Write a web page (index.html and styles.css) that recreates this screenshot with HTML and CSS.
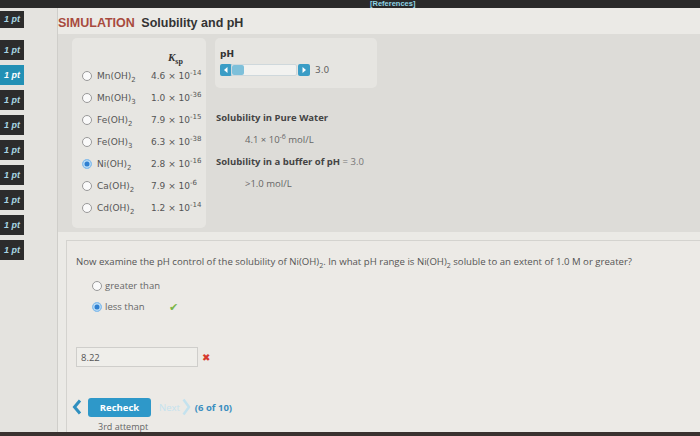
FILE: index.html
```html
<!DOCTYPE html>
<html lang="en">
<head>
    <meta charset="UTF-8">
    <meta name="viewport" content="width=device-width, initial-scale=1.0">
    <title>Solubility and pH</title>
    <link rel="stylesheet" href="styles.css">
</head>
<body>
    <div class="topbar"><span class="refs">[References]</span></div>

    <div class="page">
        <ul class="points">
            <li class="pt first">1 pt</li>
            <li class="pt">1 pt</li>
            <li class="pt current">1 pt</li>
            <li class="pt">1 pt</li>
            <li class="pt">1 pt</li>
            <li class="pt">1 pt</li>
            <li class="pt">1 pt</li>
            <li class="pt">1 pt</li>
            <li class="pt">1 pt</li>
            <li class="pt">1 pt</li>
        </ul>

        <main class="content">
            <h1 class="title"><span class="sim">SIMULATION</span> Solubility and pH</h1>

            <section class="sim-box">
                <div class="ksp-panel">
                    <div class="ksp-head"><i>K</i><sub>sp</sub></div>
                    <div class="ksp-row"><span class="radio"></span><span class="formula">Mn(OH)<sub>2</sub></span><span class="ksp">4.6 × 10<sup>-14</sup></span></div>
                    <div class="ksp-row"><span class="radio"></span><span class="formula">Mn(OH)<sub>3</sub></span><span class="ksp">1.0 × 10<sup>-36</sup></span></div>
                    <div class="ksp-row"><span class="radio"></span><span class="formula">Fe(OH)<sub>2</sub></span><span class="ksp">7.9 × 10<sup>-15</sup></span></div>
                    <div class="ksp-row"><span class="radio"></span><span class="formula">Fe(OH)<sub>3</sub></span><span class="ksp">6.3 × 10<sup>-38</sup></span></div>
                    <div class="ksp-row"><span class="radio checked"></span><span class="formula">Ni(OH)<sub>2</sub></span><span class="ksp">2.8 × 10<sup>-16</sup></span></div>
                    <div class="ksp-row"><span class="radio"></span><span class="formula">Ca(OH)<sub>2</sub></span><span class="ksp">7.9 × 10<sup>-6</sup></span></div>
                    <div class="ksp-row"><span class="radio"></span><span class="formula">Cd(OH)<sub>2</sub></span><span class="ksp">1.2 × 10<sup>-14</sup></span></div>
                </div>

                <div class="sim-right">
                    <div class="ph-panel">
                        <div class="ph-label">pH</div>
                        <div class="slider">
                            <span class="sl-btn">
                                <svg width="12" height="12" viewBox="0 0 12 12"><path d="M7.5 3 L4 6 L7.5 9 Z" fill="#fff"/></svg>
                            </span>
                            <span class="track"><span class="thumb"></span></span>
                            <span class="sl-btn">
                                <svg width="12" height="12" viewBox="0 0 12 12"><path d="M4.5 3 L8 6 L4.5 9 Z" fill="#fff"/></svg>
                            </span>
                            <span class="ph-val">3.0</span>
                        </div>
                    </div>

                    <div class="results">
                        <p class="res-title">Solubility in Pure Water</p>
                        <p class="res-val">4.1 × 10<sup>-6</sup> mol/L</p>
                        <p class="res-title">Solubility in a buffer of pH <span class="plain">= 3.0</span></p>
                        <p class="res-val">&gt;1.0 mol/L</p>
                    </div>
                </div>
            </section>

            <section class="question">
                <p class="q-text">Now examine the pH control of the solubility of Ni(OH)<sub>2</sub>. In what pH range is Ni(OH)<sub>2</sub> soluble to an extent of 1.0 M or greater?</p>
                <div class="options">
                    <div class="option"><span class="radio"></span>greater than</div>
                    <div class="option"><span class="radio checked"></span>less than<span class="check">&#10004;</span></div>
                </div>
                <div class="answer">
                    <input class="answer-input" type="text" value="8.22">
                    <span class="wrong">&#10006;</span>
                </div>
                <div class="nav">
                    <span class="prev">
                        <svg width="10" height="16" viewBox="0 0 10 16"><path d="M8 1.5 L2.5 8 L8 14.5" fill="none" stroke="#2f8fbf" stroke-width="3"/></svg>
                    </span>
                    <button class="recheck">Recheck</button>
                    <span class="next">Next
                        <svg width="9" height="18" viewBox="0 0 9 18"><path d="M1.5 1.5 L7 9 L1.5 16.5" fill="none" stroke="#c4e2ee" stroke-width="2.5"/></svg>
                    </span>
                    <span class="count">(6 of 10)</span>
                </div>
                <div class="attempt">3rd attempt</div>
            </section>
        </main>
    </div>

    <div class="bottombar"></div>
</body>
</html>
```

FILE: styles.css
```css
body {
    margin: 0;
    width: 700px;
    height: 436px;
    overflow: hidden;
    background-color: #e4e3df;
    font-family: "Open Sans", Arial, sans-serif;
    color: #555;
}
.topbar {
    height: 8px;
    background-color: #2a2a2a;
    padding-left: 370px;
    overflow: hidden;
}
.refs {
    display: block;
    font-family: "Liberation Sans", Arial, sans-serif;
    font-size: 7.5px;
    font-weight: bold;
    line-height: 8px;
    color: #8fd6e6;
}
.page {
    display: flex;
    height: 424px;
    overflow: hidden;
}

/* point badges */
.points {
    list-style: none;
    margin: 0;
    padding: 3px 0 0;
    width: 24px;
    flex-shrink: 0;
}
.pt {
    height: 20px;
    margin-bottom: 5px;
    background-color: #2c2c2c;
    color: #a9d8e4;
    font-family: "Liberation Sans", Arial, sans-serif;
    font-size: 9px;
    font-weight: bold;
    font-style: italic;
    line-height: 20px;
    text-align: center;
}
.pt.first {
    height: 17px;
    line-height: 17px;
    margin-bottom: 12px;
}
.pt.current {
    background-color: #2290b5;
    color: #fff;
}

.content {
    flex: 1;
    margin-left: 33px;
    border-left: 1px solid #cfceca;
    background-color: #ebeae6;
    padding-top: 7px;
}
.title {
    margin: 0;
    font-family: "Liberation Sans", Arial, sans-serif;
    font-size: 12.5px;
    line-height: 16px;
    color: #333;
}
.sim {
    color: #a84a3e;
    margin-right: 3px;
}

/* simulation */
.sim-box {
    display: flex;
    gap: 9px;
    margin-top: 3px;
    height: 194px;
    padding: 4px 14px 0;
    background-color: #dddcd8;
}
.ksp-panel {
    width: 134px;
    height: 190px;
    padding-top: 11px;
    box-sizing: border-box;
    background-color: #e7e6e2;
    border-radius: 5px;
    font-family: "DejaVu Sans", Verdana, sans-serif;
    font-size: 9px;
    color: #555;
}
.ksp-head {
    padding-left: 96px;
    line-height: 16px;
    font-family: "Liberation Serif", serif;
    font-weight: bold;
    font-size: 11px;
    color: #333;
}
.ksp-head sub {
    font-size: 8px;
}
.ksp-row {
    display: flex;
    align-items: center;
    height: 22px;
    padding-left: 10px;
}
.radio {
    width: 8px;
    height: 8px;
    border: 1px solid #999;
    border-radius: 50%;
    background-color: #fafafa;
    margin-right: 5px;
    flex-shrink: 0;
    box-sizing: content-box;
}
.radio.checked {
    background-color: #2f7fd0;
    border-color: #8cc2ee;
    box-shadow: inset 0 0 0 1.5px #b9dcf6;
}
.formula {
    width: 54px;
}
sub, sup {
    font-size: 7px;
    line-height: 0;
}
.sim-right {
    width: 200px;
}
.ph-panel {
    width: 162px;
    height: 50px;
    box-sizing: border-box;
    padding: 10px 0 0 5px;
    background-color: #e6e5e1;
    border-radius: 5px;
}
.ph-label {
    font-family: "DejaVu Sans", Verdana, sans-serif;
    font-weight: bold;
    font-size: 9px;
    line-height: 12px;
    color: #333;
}
.slider {
    display: flex;
    align-items: center;
    margin-top: 4px;
    height: 12px;
}
.sl-btn {
    display: flex;
    width: 12px;
    height: 12px;
    border-radius: 2px;
    background-color: #3b9dc6;
}
.track {
    display: flex;
    width: 64px;
    height: 10px;
    background-color: #f2f2f0;
    border: 1px solid #cfd8dc;
    border-radius: 2px;
    margin: 0 1px 0 -1px;
}
.thumb {
    width: 12px;
    height: 10px;
    background-color: #7ec0da;
    border-radius: 2px;
}
.ph-val {
    margin-left: 5px;
    font-family: "DejaVu Sans", Verdana, sans-serif;
    font-size: 9px;
    color: #666;
}
.results {
    margin-top: 19px;
    padding-left: 1px;
    font-size: 9.5px;
}
.results p {
    margin: 0;
    line-height: 22px;
}
.res-title {
    font-weight: bold;
    color: #444;
}
.res-title .plain {
    font-weight: normal;
    color: #777;
}
.res-val {
    padding-left: 29px;
    color: #666;
}

/* question */
.question {
    margin: 8px 0 0 8px;
    height: 192px;
    padding: 13px 0 0 9px;
    background-color: #eceae6;
    border: 1px solid #d4d3cf;
    border-right: none;
    font-size: 9.6px;
}
.q-text {
    margin: 0;
    line-height: 16px;
    color: #555;
}
.options {
    margin-top: 5px;
    padding-left: 16px;
}
.option {
    display: flex;
    align-items: center;
    height: 21px;
    font-size: 9.5px;
    color: #666;
}
.option .radio {
    margin-right: 3px;
}
.check {
    margin-left: 24px;
    color: #7ab648;
    font-size: 11px;
}
.answer {
    display: flex;
    align-items: center;
    margin-top: 30px;
}
.answer-input {
    width: 122px;
    height: 20px;
    box-sizing: border-box;
    padding: 0 4px;
    border: 1px solid #cfcecb;
    background-color: #efeeea;
    font-family: "Open Sans", Arial, sans-serif;
    font-size: 9.5px;
    color: #555;
}
.wrong {
    margin-left: 4px;
    color: #d63a2e;
    font-size: 10px;
}
.nav {
    display: flex;
    align-items: center;
    margin-top: 30px;
    height: 20px;
}
.prev {
    display: flex;
    margin-left: -4px;
}
.recheck {
    margin-left: 6px;
    width: 63px;
    height: 19px;
    border: none;
    border-radius: 3px;
    background-color: #2e98c9;
    color: #fff;
    font-family: "Open Sans", Arial, sans-serif;
    font-weight: bold;
    font-size: 9.5px;
    padding: 0;
}
.next {
    display: flex;
    align-items: center;
    margin-left: 8px;
    color: #c4e2ee;
    font-size: 9.5px;
    gap: 2px;
}
.count {
    margin-left: 4px;
    color: #3a8ec0;
    font-weight: bold;
    font-size: 9.5px;
}
.attempt {
    margin: 4px 0 0 22px;
    color: #666;
    font-size: 9px;
    line-height: 12px;
}

.bottombar {
    height: 4px;
    background-color: #3a3230;
}
```
